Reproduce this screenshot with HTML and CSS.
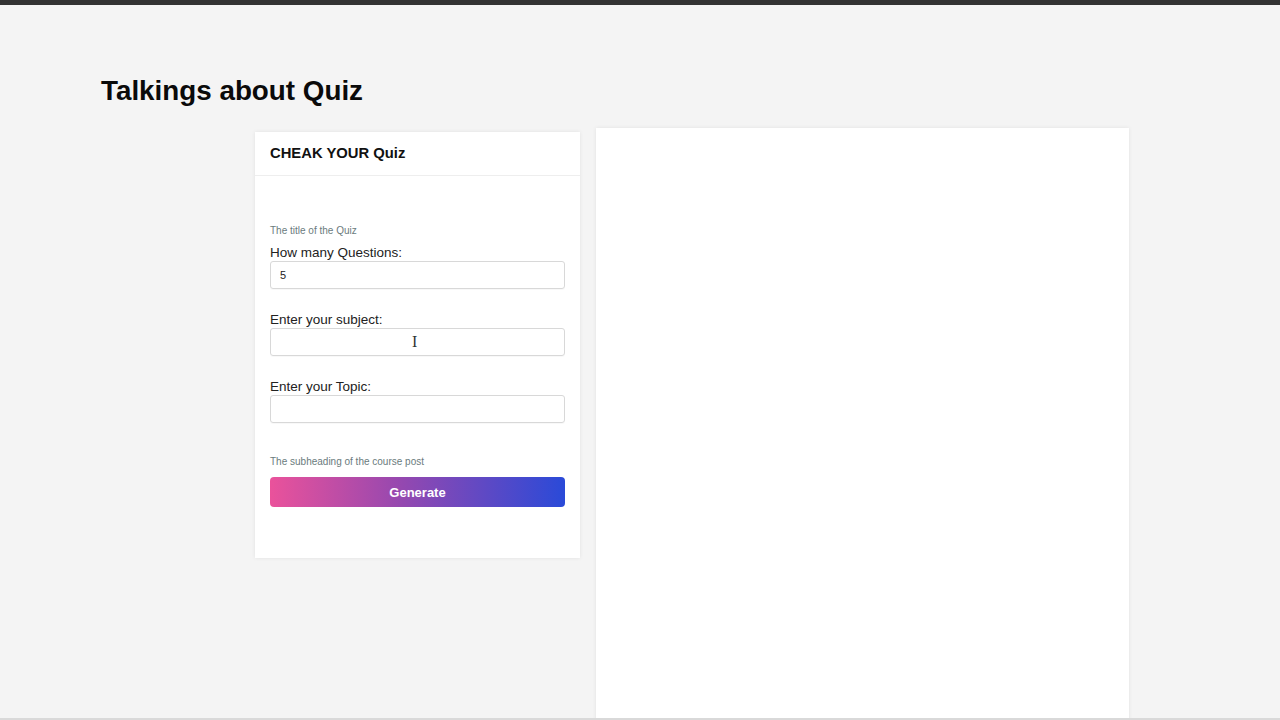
FILE: index.html
```html
<!DOCTYPE html>
<html>
<head>
<meta charset="utf-8">
<link rel="stylesheet" href="styles.css">
</head>
<body>
<div class="topbar"></div>
<div class="page">
  <h1 class="title">Talkings about Quiz</h1>
  <div class="row">
    <div class="card form-card">
      <div class="card-header">CHEAK YOUR Quiz</div>
      <div class="card-body">
        <div class="hint">The title of the Quiz</div>
        <label class="label label-first">How many Questions:</label>
        <div class="input"><span class="value">5</span></div>
        <label class="label">Enter your subject:</label>
        <div class="input"><span class="cursor">I</span></div>
        <label class="label">Enter your Topic:</label>
        <div class="input"></div>
        <div class="hint hint2">The subheading of the course post</div>
        <button class="btn">Generate</button>
      </div>
    </div>
    <div class="card output-card"></div>
  </div>
</div>
<div class="bottomline"></div>
</body>
</html>
```
FILE: styles.css
```css
html, body {
  margin: 0;
  padding: 0;
  height: 720px;
  overflow: hidden;
  background: #f4f4f4;
  font-family: "Liberation Sans", Arial, sans-serif;
  color: #111;
}
.topbar {
  height: 5px;
  background: #333;
}
.page {
  height: 713px;
  overflow: hidden;
}
.title {
  margin: 0;
  padding: 69px 0 0 101px;
  font-size: 27.8px;
  line-height: 34px;
  font-weight: bold;
  color: #0a0a0a;
}
.row {
  display: flex;
  align-items: flex-start;
  gap: 16px;
  margin: 20px 0 0 255px;
}
.card {
  background: #fff;
  box-shadow: 0 0 4px rgba(0,0,0,0.08);
}
.form-card {
  width: 325px;
  margin-top: 4px;
}
.output-card {
  width: 533px;
  height: 620px;
}
.card-header {
  padding: 13px 15px 0;
  height: 30px;
  font-size: 14.8px;
  font-weight: bold;
  border-bottom: 1px solid #eee;
  line-height: 16px;
}
.card-body {
  padding: 49px 15px 51px;
  display: flex;
  flex-direction: column;
}
.hint {
  font-size: 10px;
  color: #6b7b7d;
  line-height: 12px;
}
.hint2 {
  margin-top: 33px;
}
.label {
  margin-top: 23px;
  font-size: 13.5px;
  line-height: 16px;
  color: #222;
}
.label-first {
  margin-top: 8px;
}
.input {
  margin-top: 0;
  height: 26px;
  border: 1px solid #d8d8d8;
  border-radius: 3px;
  position: relative;
  box-shadow: 0 1px 1px rgba(0,0,0,0.03);
}
.value {
  position: absolute;
  left: 9px;
  top: 7px;
  font-size: 11px;
  color: #222;
}
.cursor {
  position: absolute;
  left: 141px;
  top: 4px;
  font-family: "Liberation Serif", serif;
  font-size: 16px;
  color: #333;
}
.btn {
  margin-top: 9px;
  height: 30px;
  border: none;
  border-radius: 4px;
  background: linear-gradient(90deg, #ea529b 0%, #9448b0 45%, #2a4ad8 100%);
  color: #fff;
  font-family: "Liberation Sans", Arial, sans-serif;
  font-weight: bold;
  font-size: 13px;
  cursor: pointer;
}
.bottomline {
  height: 2px;
  background: #d9d9d9;
}
```
